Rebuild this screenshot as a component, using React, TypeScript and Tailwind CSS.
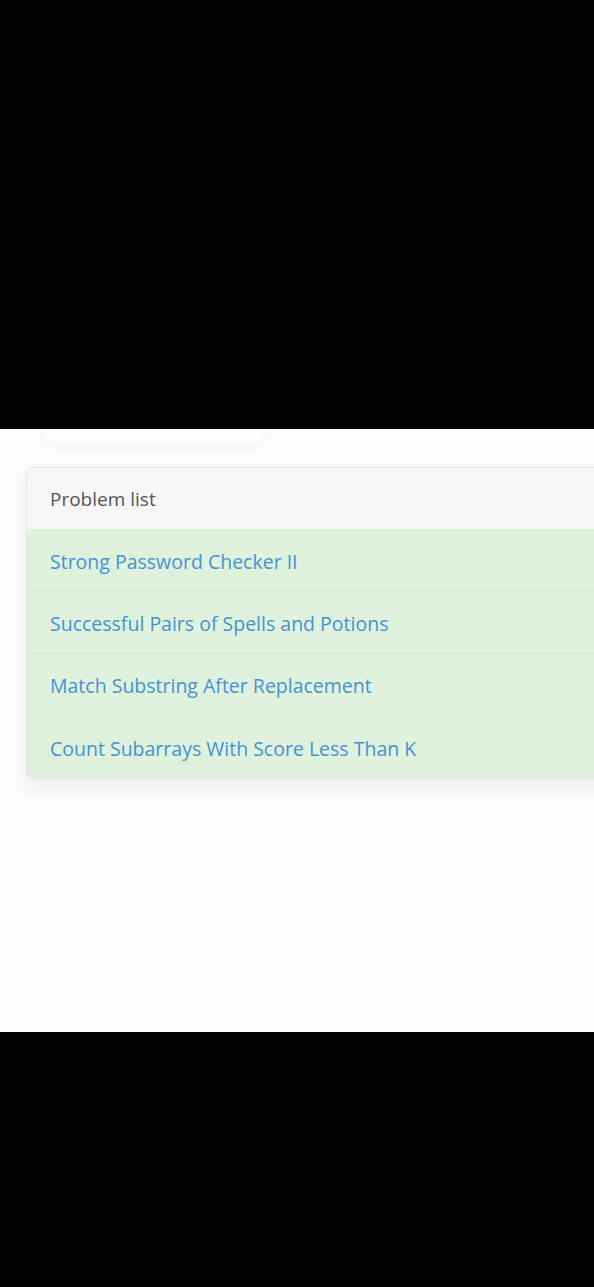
const problems = [
  'Strong Password Checker II',
  'Successful Pairs of Spells and Potions',
  'Match Substring After Replacement',
  'Count Subarrays With Score Less Than K',
];

export default function App() {
  return (
    <div className="w-[594px] h-[1287px] bg-black flex flex-col" style={{ fontFamily: '"Open Sans", "Noto Sans", sans-serif' }}>
      <div className="h-[429px] shrink-0" />
      <div className="h-[603px] shrink-0 bg-[#fdfdfe] overflow-hidden relative">
        {/* faint shadow left over from the element scrolled above */}
        <div className="absolute left-[40px] top-[-30px] w-[226px] h-[45px] rounded-[20px] bg-[#fdfdfe] shadow-[0_6px_12px_rgba(0,0,0,0.035)]" />
        <div className="pt-[38px] pl-[26px]">
          <div className="w-[700px] rounded-[5px] border border-[#e6e6e6] overflow-hidden shadow-[0_8px_22px_rgba(0,0,0,0.08)]">
            <div className="h-[62px] bg-[#f7f7f7] border-b border-[#e8e8e8] flex items-center pl-[23px] pt-[2px] text-[19px] text-[#555555]">
              Problem list
            </div>
            {problems.map((p, i) => (
              <div
                key={p}
                className={`h-[62px] bg-[#dff3dc] flex items-center pl-[23px] pt-[3px] text-[19.5px] text-[#4592d8] ${i < problems.length - 1 ? 'border-b border-[#d7e8d3]' : ''}`}
              >
                {p}
              </div>
            ))}
          </div>
        </div>
      </div>
      <div className="flex-1" />
    </div>
  );
}
